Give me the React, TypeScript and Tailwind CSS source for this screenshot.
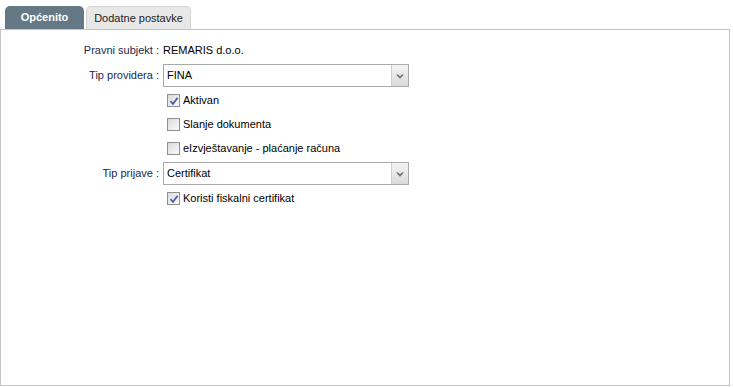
import React from "react";

const Check = ({ checked }: { checked: boolean }) => (
  <span className="relative inline-block w-[13px] h-[13px] border border-[#8f8f8f] bg-gradient-to-br from-[#dcdcdc] to-[#f8f8f8] shrink-0">
    {checked && (
      <svg className="absolute left-[1px] top-[1px]" width="10" height="10" viewBox="0 0 10 10">
        <path d="M1.5 5.2 L4 7.8 L8.6 1.8" fill="none" stroke="#4e5fa0" strokeWidth="1.8" strokeLinejoin="miter" />
      </svg>
    )}
  </span>
);

const Select = ({ value }: { value: string }) => (
  <div className="flex w-[246px] h-[23px] border border-[#a9a9a9] bg-white">
    <div className="flex-1 flex items-center pl-[3px] text-black">{value}</div>
    <div className="w-[17px] h-full border-l border-[#cfcfcf] bg-gradient-to-b from-[#f4f4f4] to-[#dadada] flex items-center justify-center">
      <svg width="8" height="6" viewBox="0 0 8 6">
        <path d="M1 1.5 L4 4.5 L7 1.5" fill="none" stroke="#6e6e6e" strokeWidth="1.6" />
      </svg>
    </div>
  </div>
);

const Row = ({ label, children, h }: { label?: string; children: React.ReactNode; h: string }) => (
  <div className={`flex items-center ${h}`}>
    <div className="w-[158px] text-right text-[#1a2a4e] whitespace-nowrap">{label}</div>
    <div className="ml-[4px] flex items-center">{children}</div>
  </div>
);

const CheckRow = ({ label, checked }: { label: string; checked: boolean }) => (
  <div className="flex items-center h-[24px] pl-[166px]">
    <Check checked={checked} />
    <span className="ml-[3px] text-black">{label}</span>
  </div>
);

export default function App() {
  return (
    <div className="w-[733px] h-[387px] bg-white text-[11px] font-['Liberation_Sans',Arial,sans-serif]">
      <div className="flex pt-[6px] pl-[5px] gap-[2px] h-[29px]">
        <div className="w-[79px] h-[23px] rounded-t-[5px] bg-[#647985] text-white font-bold flex items-center justify-center">
          Općenito
        </div>
        <div className="w-[105px] h-[23px] rounded-t-[5px] bg-[#e8e8e8] border border-b-0 border-[#d4d4d4] text-[#222] flex items-center justify-center">
          Dodatne postavke
        </div>
      </div>
      <div className="w-[730px] h-[357px] border border-[#c4c4c4] pt-[11px]">
        <Row label="Pravni subjekt :" h="h-[19px]">
          <span className="text-black">REMARIS d.o.o.</span>
        </Row>
        <div className="mt-[4px]">
          <Row label="Tip providera :" h="h-[23px]">
            <Select value="FINA" />
          </Row>
        </div>
        <div className="mt-[1px]">
          <CheckRow label="Aktivan" checked />
          <CheckRow label="Slanje dokumenta" checked={false} />
          <CheckRow label="eIzvještavanje - plaćanje računa" checked={false} />
        </div>
        <div className="mt-[2px]">
          <Row label="Tip prijave :" h="h-[23px]">
            <Select value="Certifikat" />
          </Row>
        </div>
        <div className="mt-[1px]">
          <CheckRow label="Koristi fiskalni certifikat" checked />
        </div>
      </div>
    </div>
  );
}
